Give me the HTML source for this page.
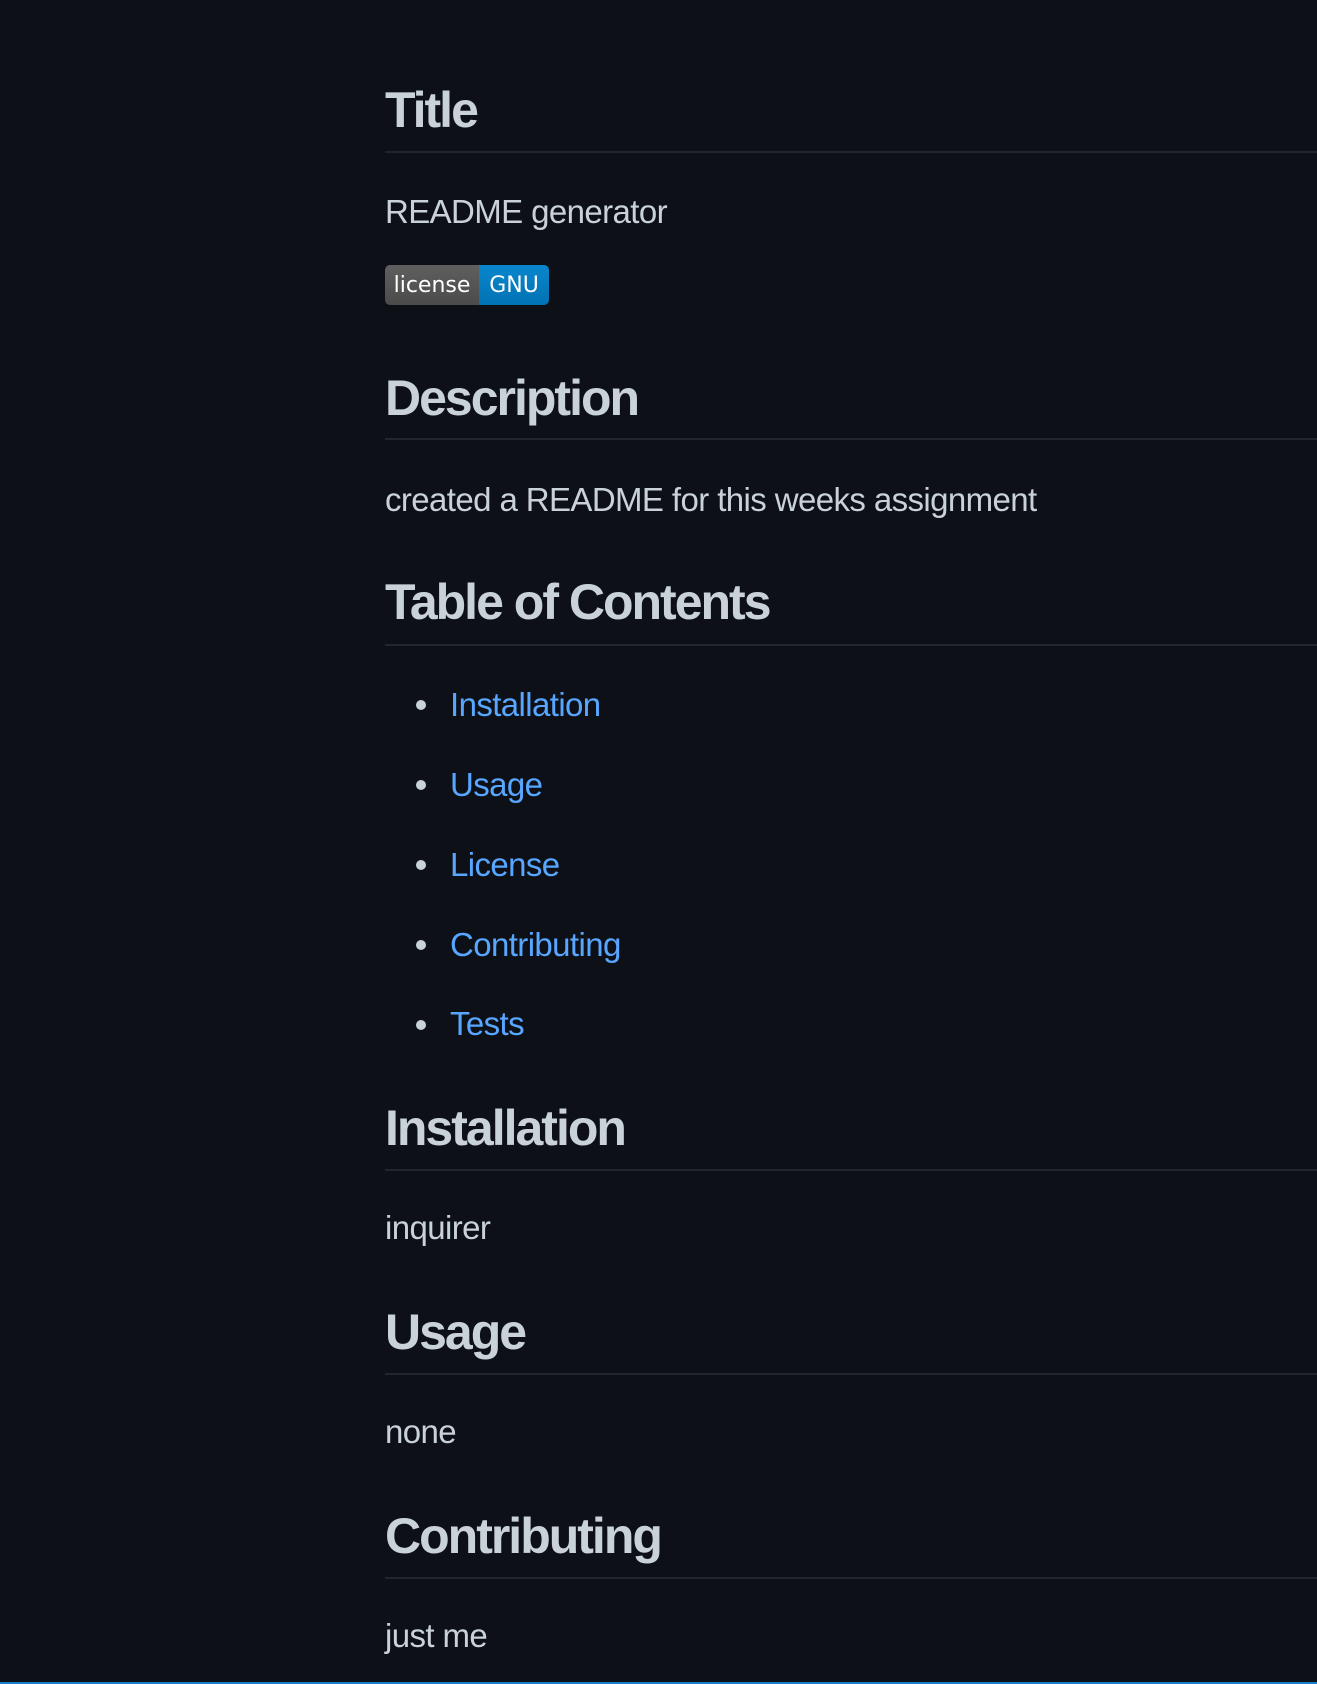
<!DOCTYPE html>
<html><head><meta charset="utf-8"><style>
html,body{margin:0;padding:0;}
body{width:1317px;height:1684px;background:#0d1117;position:relative;overflow:hidden;font-family:"Liberation Sans",Arial,sans-serif;color:#c9d1d9;}
.t{position:absolute;left:385px;white-space:nowrap;line-height:1;}
.h{font-size:50px;font-weight:bold;letter-spacing:-2px;}
.p{font-size:33px;letter-spacing:-0.6px;}
.a{font-size:33px;letter-spacing:-0.6px;color:#58a6ff;left:450px;}
.hr{position:absolute;left:385px;right:0;height:2px;background:#21262d;}
.dot{position:absolute;left:416px;width:10px;height:10px;border-radius:50%;background:#c9d1d9;}
.badge{position:absolute;left:385px;top:265px;height:40px;width:164px;border-radius:5px;overflow:hidden;display:flex;font-family:"DejaVu Sans",Verdana,sans-serif;font-size:22px;color:#fff;line-height:42px;}
.badge span{display:block;text-align:center;}
</style></head><body>
<div class="t h" style="top:85px">Title</div>
<div class="hr" style="top:151px"></div>
<div class="t p" style="top:195px">README generator</div>
<div class="badge"><span style="width:94px;background:linear-gradient(#5f5f5f,#4b4b4b)">license</span><span style="width:70px;background:linear-gradient(#0a86cc,#0073b4)">GNU</span></div>
<div class="t h" style="top:373px">Description</div>
<div class="hr" style="top:438px"></div>
<div class="t p" style="top:483px">created a README for this weeks assignment</div>
<div class="t h" style="top:577px">Table of Contents</div>
<div class="hr" style="top:644px"></div>
<div class="dot" style="top:700px"></div><div class="t a" style="top:688px">Installation</div>
<div class="dot" style="top:780px"></div><div class="t a" style="top:768px">Usage</div>
<div class="dot" style="top:860px"></div><div class="t a" style="top:848px">License</div>
<div class="dot" style="top:940px"></div><div class="t a" style="top:928px">Contributing</div>
<div class="dot" style="top:1020px"></div><div class="t a" style="top:1007px">Tests</div>
<div class="t h" style="top:1103px">Installation</div>
<div class="hr" style="top:1169px"></div>
<div class="t p" style="top:1211px">inquirer</div>
<div class="t h" style="top:1307px">Usage</div>
<div class="hr" style="top:1373px"></div>
<div class="t p" style="top:1415px">none</div>
<div class="t h" style="top:1511px">Contributing</div>
<div class="hr" style="top:1577px"></div>
<div class="t p" style="top:1619px">just me</div>
<div style="position:absolute;left:0;right:0;top:1682px;height:2px;background:#1a7fc4"></div>
</body></html>
